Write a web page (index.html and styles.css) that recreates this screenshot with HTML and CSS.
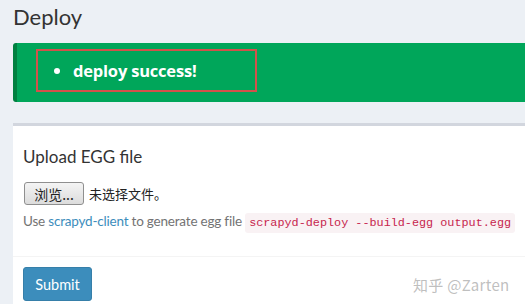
FILE: index.html
```html
<!DOCTYPE html>
<html lang="zh">
<head>
<meta charset="utf-8">
<title>Deploy</title>
<link rel="stylesheet" href="styles.css">
</head>
<body>
<div class="page">
  <h1 class="title">Deploy</h1>
  <div class="alert">
    <div class="mark">
      <ul class="msgs"><li>deploy success!</li></ul>
    </div>
  </div>
  <div class="box">
    <div class="box-header"><h3 class="box-title">Upload EGG file</h3></div>
    <div class="box-body">
      <div class="file-row"><button class="file-btn">浏览...</button><span class="file-name">未选择文件。</span></div>
      <p class="help">Use <a class="link">scrapyd-client</a> to generate egg file <code class="code">scrapyd-deploy --build-egg output.egg</code></p>
    </div>
    <div class="box-footer"><button class="submit">Submit</button></div>
  </div>
  <div class="watermark">知乎 @Zarten</div>
</div>
</body>
</html>
```

FILE: styles.css
```css
html, body {
  margin: 0;
  padding: 0;
}
body {
  background: #ecf0f5;
  font-family: "Lato", "Noto Sans CJK SC", sans-serif;
  color: #333;
  width: 525px;
  height: 304px;
  overflow: hidden;
}
.page {
  position: relative;
  height: 304px;
  box-sizing: border-box;
  padding-left: 13px;
  overflow: hidden;
}
.title {
  margin: 0;
  padding-top: 4px;
  font-size: 22px;
  font-weight: 400;
  line-height: 26px;
  height: 39px;
  color: #333;
}
.alert {
  height: 59px;
  background: #00a65a;
  border-left: 4px solid #008040;
  border-radius: 3px 0 0 3px;
  box-sizing: border-box;
  padding-top: 6px;
  padding-left: 19px;
}
.mark {
  width: 221px;
  height: 43px;
  box-sizing: border-box;
  border: 2px solid #d2524b;
  display: flex;
  align-items: center;
}
.msgs {
  margin: 0;
  padding-left: 35px;
  color: #fff;
  font-family: "Open Sans", sans-serif;
  font-weight: 700;
  font-size: 16.5px;
  line-height: 20px;
  letter-spacing: -0.2px;
}
.box {
  margin-top: 21px;
  background: #fff;
  border-top: 3px solid #d2d6de;
}
.box-header {
  padding: 19px 10px 0 10px;
}
.box-title {
  margin: 0;
  font-size: 17px;
  font-weight: 400;
  line-height: 24px;
  color: #333;
}
.box-body {
  padding: 13px 10px 0 11px;
}
.file-row {
  display: flex;
  align-items: center;
  height: 23px;
}
.file-btn {
  height: 23px;
  width: 60px;
  padding: 0;
  font-family: "Noto Sans CJK SC", sans-serif;
  font-size: 14px;
  color: #222;
  background: linear-gradient(#f4f4f4, #dcdcdc);
  border: 1px solid #8f8f8f;
  border-radius: 3px;
}
.file-name {
  margin-left: 5px;
  font-family: "Noto Sans CJK SC", sans-serif;
  font-size: 13px;
  color: #222;
}
.help {
  margin: 6px 0 0 -1px;
  font-size: 13.5px;
  letter-spacing: -0.2px;
  line-height: 21px;
  color: #737373;
  white-space: nowrap;
}
.link {
  color: #3c8dbc;
}
.code {
  font-family: "Liberation Mono", monospace;
  font-size: 11.8px;
  letter-spacing: 0;
  color: #c7254e;
  background: #f9f2f4;
  padding: 3px 4px;
  border-radius: 3px;
}
.box-footer {
  margin-top: 22px;
  border-top: 1px solid #f4f4f4;
  padding: 10px 10px 3px 10px;
}
.submit {
  display: block;
  width: 69px;
  height: 34px;
  background: #3c8dbc;
  border: 1px solid #367fa9;
  border-radius: 3px;
  color: #fff;
  font-family: "Lato", sans-serif;
  font-size: 14.5px;
  padding: 0;
}
.watermark {
  position: absolute;
  left: 413px;
  top: 274px;
  font-family: "Noto Sans CJK SC", sans-serif;
  font-size: 15px;
  color: rgba(170, 170, 170, 0.75);
  letter-spacing: 0.3px;
}
```
